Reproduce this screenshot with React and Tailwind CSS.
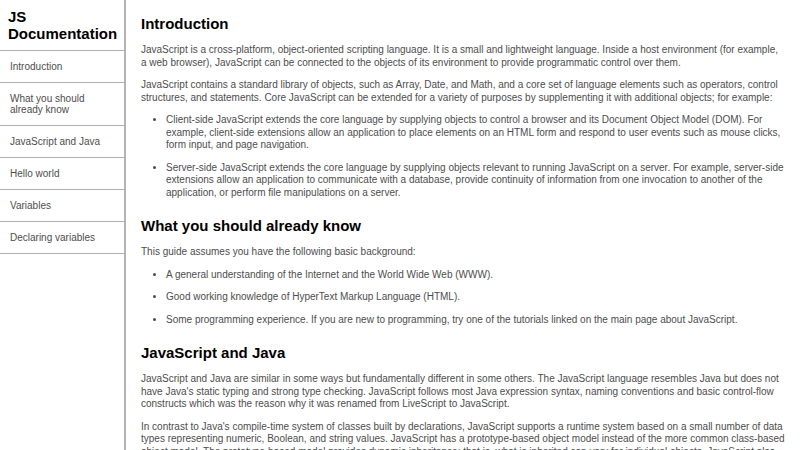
const navItems = [
  'Introduction',
  'What you should already know',
  'JavaScript and Java',
  'Hello world',
  'Variables',
  'Declaring variables',
];

function Heading({ children }) {
  return <h2 className="mb-[11px] text-[15px] font-bold leading-[18px] text-black">{children}</h2>;
}

function P({ children }) {
  return <p className="mb-[10px]">{children}</p>;
}

function Bullets({ items }) {
  return (
    <ul className="mb-[10px] list-disc pl-[25px]">
      {items.map((t, i) => (
        <li key={i} className="mb-[10px]">
          {t}
        </li>
      ))}
    </ul>
  );
}

export default function App() {
  return (
    <div
      className="flex h-[450px] w-[800px] overflow-hidden bg-white"
      style={{ fontFamily: '"Liberation Sans", Arial, sans-serif' }}
    >
      <nav className="w-[126px] shrink-0 border-r-2 border-[#b3b3b3]">
        <header className="border-b border-[#b0b0b0] px-[8px] pb-[8px] pt-[8px] text-[15px] font-bold leading-[17px] text-black">
          JS Documentation
        </header>
        <ul>
          {navItems.map((item) => (
            <li
              key={item}
              className="border-b border-[#b0b0b0] px-[10px] py-[10px] text-[10px] leading-[11px] text-[#4d4d4d]"
            >
              {item}
            </li>
          ))}
        </ul>
      </nav>

      <main className="min-w-0 flex-1 px-[15px] pt-[15px] text-[10px] leading-[12.5px] text-[#4d4d4d]">
        <section className="mb-[18px]">
          <Heading>Introduction</Heading>
          <P>
            JavaScript is a cross-platform, object-oriented scripting language. It is a small and lightweight language.
            Inside a host environment (for example, a web browser), JavaScript can be connected to the objects of its
            environment to provide programmatic control over them.
          </P>
          <P>
            JavaScript contains a standard library of objects, such as Array, Date, and Math, and a core set of language
            elements such as operators, control structures, and statements. Core JavaScript can be extended for a variety
            of purposes by supplementing it with additional objects; for example:
          </P>
          <Bullets
            items={[
              'Client-side JavaScript extends the core language by supplying objects to control a browser and its Document Object Model (DOM). For example, client-side extensions allow an application to place elements on an HTML form and respond to user events such as mouse clicks, form input, and page navigation.',
              'Server-side JavaScript extends the core language by supplying objects relevant to running JavaScript on a server. For example, server-side extensions allow an application to communicate with a database, provide continuity of information from one invocation to another of the application, or perform file manipulations on a server.',
            ]}
          />
        </section>

        <section className="mb-[18px]">
          <Heading>What you should already know</Heading>
          <P>This guide assumes you have the following basic background:</P>
          <Bullets
            items={[
              'A general understanding of the Internet and the World Wide Web (WWW).',
              'Good working knowledge of HyperText Markup Language (HTML).',
              'Some programming experience. If you are new to programming, try one of the tutorials linked on the main page about JavaScript.',
            ]}
          />
        </section>

        <section>
          <Heading>JavaScript and Java</Heading>
          <P>
            JavaScript and Java are similar in some ways but fundamentally different in some others. The JavaScript
            language resembles Java but does not have Java's static typing and strong type checking. JavaScript follows
            most Java expression syntax, naming conventions and basic control-flow constructs which was the reason why it
            was renamed from LiveScript to JavaScript.
          </P>
          <P>
            In contrast to Java's compile-time system of classes built by declarations, JavaScript supports a runtime
            system based on a small number of data types representing numeric, Boolean, and string values. JavaScript has
            a prototype-based object model instead of the more common class-based object model. The prototype-based model
            provides dynamic inheritance; that is, what is inherited can vary for individual objects. JavaScript also
            supports functions without any special declarative requirements.
          </P>
        </section>
      </main>
    </div>
  );
}
